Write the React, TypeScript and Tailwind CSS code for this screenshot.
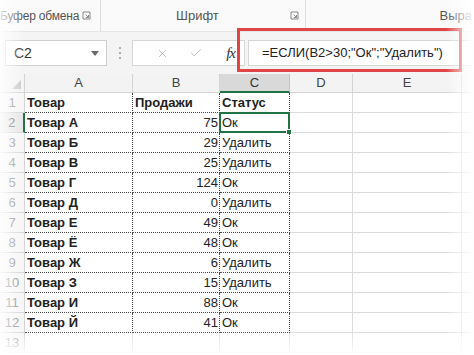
import React from 'react'
import { X, Check } from 'lucide-react'

const rows: [string, string, string][] = [
  ['Товар А', '75', 'Ок'],
  ['Товар Б', '29', 'Удалить'],
  ['Товар В', '25', 'Удалить'],
  ['Товар Г', '124', 'Ок'],
  ['Товар Д', '0', 'Удалить'],
  ['Товар Е', '49', 'Ок'],
  ['Товар Ё', '48', 'Ок'],
  ['Товар Ж', '6', 'Удалить'],
  ['Товар З', '15', 'Удалить'],
  ['Товар И', '88', 'Ок'],
  ['Товар Й', '41', 'Ок'],
]

const Launcher = () => (
  <svg width="9" height="9" viewBox="0 0 9 9" className="text-[#8a8a8a] shrink-0">
    <path d="M1 1h7v7H1z" fill="none" stroke="currentColor" strokeWidth="1" />
    <path d="M3.5 3.5l3 3M6.5 4v2.5H4" fill="none" stroke="currentColor" strokeWidth="1" />
  </svg>
)

const inRange = 'border-r border-b border-dotted border-[#4a4a4a]'
const plain = 'border-r border-b border-solid border-[#dcdcdc]'

const App: React.FC = () => {
  return (
    <div className="relative w-[474px] h-[355px] overflow-hidden bg-white font-['Liberation_Sans',Arial,sans-serif] text-[#222]">
      {/* Ribbon group labels */}
      <div className="flex h-[31px] bg-[#fafafa] text-[12px] text-[#555] whitespace-nowrap">
        <div className="w-[101px] flex items-center justify-between pr-[9px] border-r border-[#dedede]">
          <span className="tracking-[-0.2px]">Буфер обмена</span>
          <Launcher />
        </div>
        <div className="w-[205px] flex items-center justify-end pr-[6px] border-r border-[#dedede] relative">
          <span className="absolute left-[75px] text-[13px]">Шрифт</span>
          <Launcher />
        </div>
        <div className="flex-1 flex items-center justify-end pr-[2px]">
          <span className="text-[13px]">Выра</span>
        </div>
      </div>

      {/* Formula bar */}
      <div className="flex items-center h-[43px] bg-[#f4f4f4] border-t border-[#e6e6e6]">
        <div className="ml-[5px] w-[102px] h-[26px] bg-white border border-[#cfcfcf] flex items-center justify-between pl-[8px] pr-[7px] text-[14px] text-[#333]">
          <span>C2</span>
          <svg width="8" height="5" viewBox="0 0 8 5"><path d="M0 0h8L4 5z" fill="#6b6b6b" /></svg>
        </div>
        <div className="w-[25px] flex flex-col items-center gap-[3px]">
          <span className="w-[2px] h-[2px] bg-[#b0b0b0]" />
          <span className="w-[2px] h-[2px] bg-[#b0b0b0]" />
          <span className="w-[2px] h-[2px] bg-[#b0b0b0]" />
        </div>
        <div className="w-[113px] h-[26px] bg-white border border-[#d6d6d6] flex items-center pl-[23px] pr-[9px]">
          <X className="w-[13px] h-[13px] text-[#b8b8b8]" strokeWidth={1.5} />
          <Check className="w-[14px] h-[14px] text-[#b8b8b8] ml-[20px]" strokeWidth={1.5} />
          <span className="ml-auto font-['Liberation_Serif',serif] italic text-[15px] text-[#333] tracking-[-1px]">fx</span>
        </div>
        <div className="ml-[3px] flex-1 h-[26px] bg-white border border-[#d6d6d6] flex items-center pl-[13px] text-[13px] text-[#222] whitespace-nowrap">
          =ЕСЛИ(B2&gt;30;"Ок";"Удалить")
        </div>
      </div>

      {/* Sheet grid */}
      <div className="grid grid-cols-[25px_108px_87px_70px_63px_109px_1fr] text-[13px]">
        {/* Column headers */}
        <div className="h-[19px] bg-[#f3f3f3] border-r border-b border-[#d4d4d4] flex items-end justify-end pr-[3px] pb-[3px]">
          <svg width="9" height="9" viewBox="0 0 9 9"><path d="M9 0v9H0z" fill="#c9c9c9" /></svg>
        </div>
        {['A', 'B', 'C', 'D', 'E', ''].map((c) => (
          <div
            key={c || 'F'}
            className={
              c === 'C'
                ? 'h-[19px] bg-[#d9d9d9] border-r border-[#c4c4c4] border-b-2 border-b-[#217346] flex items-center justify-center text-[#333]'
                : 'h-[19px] bg-[#f3f3f3] border-r border-b border-[#d4d4d4] flex items-center justify-center text-[#444]'
            }
          >
            {c}
          </div>
        ))}

        {/* Row 1 headings */}
        <div className="h-[20px] bg-[#f6f6f6] border-r border-b border-[#d4d4d4] flex items-center justify-center text-[#8a8a8a]">1</div>
        <div className={`${inRange} h-[20px] flex items-center pl-[2px] font-bold`}>Товар</div>
        <div className={`${inRange} h-[20px] flex items-center pl-[2px] font-bold`}>Продажи</div>
        <div className={`${inRange} h-[20px] flex items-center pl-[2px] font-bold`}>Статус</div>
        <div className={`${plain} h-[20px]`} />
        <div className={`${plain} h-[20px]`} />
        <div className={`${plain} h-[20px]`} />

        {rows.map(([name, qty, status], i) => (
          <React.Fragment key={name}>
            <div
              className={
                i === 0
                  ? 'h-[20px] bg-[#e6e6e6] border-r-2 border-r-[#217346] border-b border-[#d4d4d4] flex items-center justify-center text-[#666]'
                  : 'h-[20px] bg-[#f6f6f6] border-r border-b border-[#d4d4d4] flex items-center justify-center text-[#8a8a8a]'
              }
            >
              {i + 2}
            </div>
            <div className={`${inRange} h-[20px] flex items-center pl-[2px] font-bold`}>{name}</div>
            <div className={`${inRange} h-[20px] flex items-center justify-end pr-[1px]`}>{qty}</div>
            <div className={`${inRange} h-[20px] flex items-center pl-[2px] relative`}>
              {status}
              {i === 0 && (
                <div className="absolute -left-[1px] -top-[1px] -right-[1px] -bottom-[1px] border-2 border-[#217346]">
                  <span className="absolute -right-[4px] -bottom-[4px] w-[6px] h-[6px] bg-[#217346] border border-white" />
                </div>
              )}
            </div>
            <div className={`${plain} h-[20px]`} />
            <div className={`${plain} h-[20px]`} />
            <div className={`${plain} h-[20px]`} />
          </React.Fragment>
        ))}

        {/* Row 13 */}
        <div className="h-[20px] bg-[#f6f6f6] border-r border-b border-[#d4d4d4] flex items-center justify-center text-[#8a8a8a]">13</div>
        {[0, 1, 2, 3, 4, 5].map((k) => (
          <div key={k} className={`${plain} h-[20px]`} />
        ))}
      </div>

      {/* Red highlight frame around the formula */}
      <div className="absolute left-[237px] top-[28px] w-[225px] h-[44px] border-[3px] border-[#e04444]" />

      {/* Soft vignette edges */}
      <div className="pointer-events-none absolute left-0 top-0 h-full w-[24px] bg-linear-to-r from-white/85 to-transparent" />
      <div className="pointer-events-none absolute right-0 top-0 h-full w-[28px] bg-linear-to-l from-white to-transparent" />
      <div className="pointer-events-none absolute left-0 bottom-0 w-full h-[24px] bg-linear-to-t from-white to-transparent" />
    </div>
  )
}

export default App
